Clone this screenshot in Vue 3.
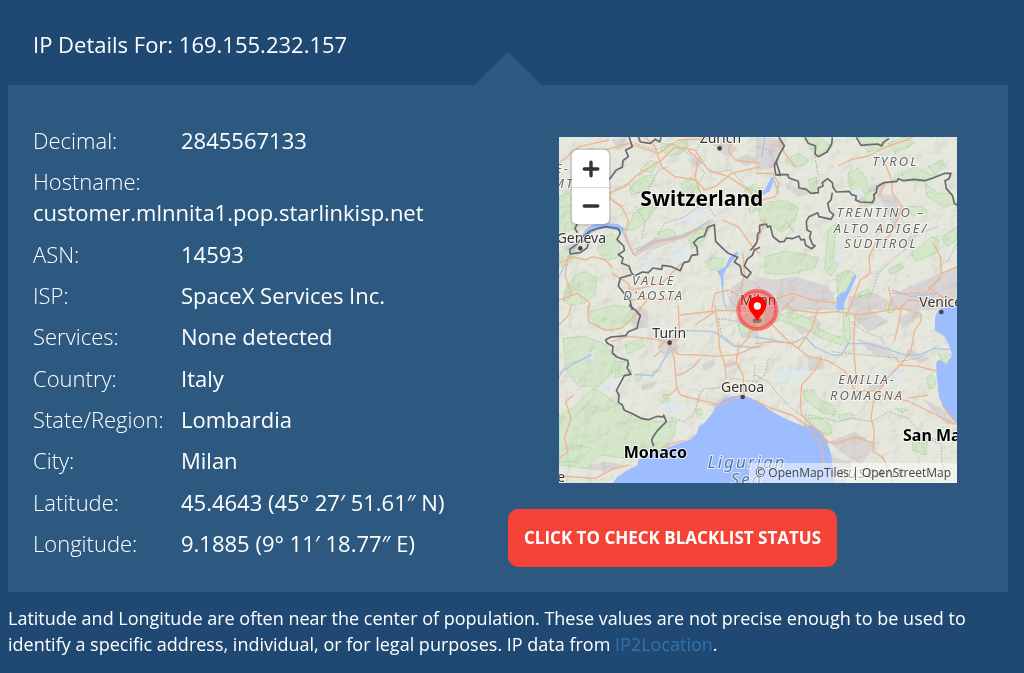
<script setup>
const details = [
  { label: 'Decimal:', value: '2845567133' },
  { label: 'Hostname:', value: 'customer.mlnnita1.pop.starlinkisp.net', wide: true },
  { label: 'ASN:', value: '14593' },
  { label: 'ISP:', value: 'SpaceX Services Inc.' },
  { label: 'Services:', value: 'None detected' },
  { label: 'Country:', value: 'Italy' },
  { label: 'State/Region:', value: 'Lombardia' },
  { label: 'City:', value: 'Milan' },
  { label: 'Latitude:', value: '45.4643 (45° 27′ 51.61″ N)' },
  { label: 'Longitude:', value: '9.1885 (9° 11′ 18.77″ E)' },
]

// Map geometry, drawn sheet by sheet: each sheet has its own origin.
const sheets = [
  {
    at: 'translate(-12 -21)',
    forest: [
      'M12 200l30-12 14 30 20 60-18 22-20-6-26 40z',
      'M12 235l45-10 10 60-30 20-25 10z',
      'M215 300l22-50 40-25 20-32 24 6-22 40-30 40-30 22z',
      'M225 175l40-35 28-6 6 22-40 30-30 10z',
      'M320 40l40 5 30-15 10 18-22 22-34 8-24-16z',
      'M380 160l24-18 22 10 4 30-24 20-24-8z',
      'M60 440l30-16 34 18-2 50-30 26-46 8-22-16 12-40z',
      'M130 330l40-20 22 30 2 40-40 12-26-30z',
      'M310 310l30-14 24 14-14 20-30 2z',
      'M450 395l30-14 28 8-10 26-32 6z',
      'M400 330l34-32 26 2-12 28-36 26z',
      'M570 180l30-20 15 20v50l-30 22z',
      'M255 120l30-30 24 8-18 30z',
      'M12 370l36-16 20 20-30 30-26 6z',
    ],
    town: [
      'M170 30l40-8 10 24-30 16z', 'M470 40l50-10 30 30-40 20z',
      'M540 90l36-20 30 20-30 20z', 'M20 350l40-10 20 20-40 14z',
      'M400 90l30-10 14 20-24 16z', 'M530 470l40-24 45 10v84h-96z',
      'M240 360l60-36 90-10 70-40 20-10-30 40-80 26-70 26-50 10z',
    ],
    snow: [
      'M370 280l34-34 50-12-10 30-40 24z', 'M250 400l40-26 30 6-20 30-40 12z',
      'M340 380l50-40 20 10-10 46-44 14z', 'M270 470l30-10 20 16-30 8z',
    ],
    water: [
      'M88 304q20-24 52-26l48 4 24 16-8 8-52-12q-30 4-48 20l-18 10z',
      'M548 362l-26 22-10 26-26 14 12 18 2 30 6-2-2-36 10-16 14-20 20-26z',
    ],
    river: [
      'M236 372l50-34 90-20 50-22 40-26', 'M88 310l-40 60-36 70',
      'M200 300l14 30 22 44', 'M502 472l4 40 10 28',
    ],
    road: [
      'M60 140l50 40 50 10 50-20 30-30 80-50 40-40 60 10 40 60 60 20 60 40 25 30',
      'M270 20l30 30 20 60 40 30 60 10 30 30 30-10 50-40 85-20',
      'M160 200l40 30 20 40-10 40 20 50 10 18 60-42 80-14 60-30',
      'M12 100l60-50 90-20', 'M150 60l70-20 90 30 60-40 90-4',
      'M500 270l50 20 50 70 15 10', 'M12 400l40-20 40 10 20-10 40 10 20 24',
      'M40 376l-10 60 20 60', 'M100 540l6-20-40-30-54 20',
      'M170 430l50 30 10 50 60-6 80 6', 'M470 540l10-50 40-10 40 20 55-30',
      'M400 60l30 30-10 50 20 60', 'M540 20l-20 40 20 30 75 10', 'M200 230l-30-20',
      'M564 370l4 60-10 50 10 60', 'M380 400l-60 60-90 20',
    ],
    canton: [
      'M240 40l60 20 50-20 50 30 50 60-40 60 20 40-40 30-60 20-40 60-60 20',
      'M440 20l-20 60 50 50 60-10 40 50 45 20', 'M180 180l40-20 20 30 40-10 30-60 30-10',
      'M240 230l30 40-10 60', 'M350 210l40 20 60-20 30 50',
      'M515 480l10 30 30 30',
    ],
    border: [
      'M222 20l10 30-20 10 8 20-16 12-2 20-18 8-16 22-18 16-60 40',
      'M250 20l6 16 30 4 14-12 14 8 4-14',
      'M66 282l-6 14 8 12M104 304L84 320l-20 24-20 14 2 14 30-4 20-14 4-14-14-8 18-28 22-8 28-6 36 6 6 14-10 18 20 20 2 14-18 12 14 10-4 16 22 8 6 18 10 12 24-12 18 2 14-14 26 4 2-12 28 4 26 12 10-24 16-4 8-18 18-2-2-22-10-14 14-14 18-6 10-26 20-8 4 50 22 22 16 14 28 12-10 14 18 12 4 24 16 12 12-16-20-20 8-20 16-12 6-16 17-8',
      'M230 434l-34 10-6 24 14 18 20 22 8 32',
    ],
  },
  {
    at: 'translate(588 -21)',
    forest: [
      'M10 240l30-24 50-4 40 20-10 40-36 34-40-20-20 10z',
      'M30 380l60-16 60 10 40 10-10 30-80 20-70-4z',
      'M140 20l60 4 30 26-30 30-24-10-14-24z',
      'M90 90l40-20 30 20-10 16-40 4z', 'M280 130l30-16 24 30 10 50-40 14-20-40z',
      'M310 22l90 0-20 34-40 10z', 'M440 130l40-20 60 30-30 14-64 0z',
      'M400 40l50-20 30 20-60 30z', 'M520 110l40-20 20 30-40 16z',
      'M510 160l40 30 40 0 16 30-40 10-50-30z', 'M470 370l60-50 22 10-10 40-60 24z',
      'M220 300l24-20-6 60 10 60-20 40-20-20z', 'M560 320l46-30v40l-30 20z',
      'M400 420l36-20 10 14-40 20z', 'M245 440l30-20 24 10-20 40-30 30z',
      'M310 490l30-14 10 20-30 10z', 'M330 190l30-10 0 40-30 10z',
      'M160 150l24-10 4 40-20 6z', 'M460 230l40 0 20 16-50 10z',
    ],
    town: [
      'M2 24l50 0 40 20-20 40-20 30-50 10z', 'M2 440l60 10 60-10 100 30 30 70H2z',
      'M280 500l60-20 60 30 60-40 146-60v130H280z', 'M90 170l60 0 20 20-40 10z',
      'M240 200l60 10 60-50 40 0-60 60z', 'M370 190l50 10 20 40-20 60-20-40z',
    ],
    snow: [
      'M285 185l30-14 16 26-20 12z', 'M240 350l20 10-6 40-14-10z',
      'M545 130l30-16 10 16-30 6z', 'M100 320l30-10 10 12-30 6z',
    ],
    water: [
      'M300 432l4 10-20 42-16 34-6 22h-16l-2-36 12-14 16-6z',
      'M0 200l30-20 20-40 8 4-14 40-40 22z',
    ],
    river: ['M56 150l16 40M30 20l-10 60', 'M410 480l60 20 80-10'],
    road: [
      'M2 130l50 0 20 30-10 40-40 10', 'M70 30l20 40 34 44',
      'M250 108l40-20 50-10 60-30 60-20 50-28', 'M390 100l20 50 2 40 30 40-20 50-20 40-40 20-20 40 4 50-30 20-30 80-14 30',
      'M2 500l50 10 60-20 60 20 80 10', 'M400 470l10 40-10 30M410 490l100 0 50-50-4-60-20-40',
      'M560 430l46-20M520 470l40 30 46 10', 'M0 350l20-50 10-30', 'M120 500l-40 40M370 200l20-40',
      'M430 540l30-30 100 10',
    ],
    canton: [
      'M2 50l40 10 20 50', 'M90 270l30 40', 'M310 500l40-10 20-60 40-40 40-30 20-50',
      'M450 350l40-40 60-20', 'M540 420l40-30 26-50', 'M180 80l10 60',
    ],
    border: [
      'M72 22l16 26-14 24-10 24 12 40-14-2-4-28 16-34',
      'M62 134l36 0 4 10 28 10 2 20 22 4 14 12 22-2 0-14 14-6-2-10 16-12 14 12 2 14 10 14 38-2 8 10 14 4-2 12 14 6 36 2 6-12-2-12 8-6 2-18 20-12 40-4 4-8 16 6 30-4 34 4 24-8 36-14 18 0-6 16-12 6 4 24 18 20 6 24 24 16 16 4',
      'M150 22l10 18 22 8-2 24 10 8 26-14 14-24 2-20',
      'M304 22l14 24 24-2 26-2 12 6 4-10 18-12',
      'M232 188l-4 22-10 10 6 24 12 10-8 14-36-8-4-12-26 12-8 14 2 26 12 6-4 16 8 20 8 6-10 8-18-10-4-18-10 2-6-12-20 8-18-2-6 10-14 2-20-16-8-32-8 4-4-10-20 4 0 20-6 6-2 24-14 20-7 5',
    ],
  },
  {
    at: 'translate(-12 504)',
    forest: [
      'M24 100l60-6 60 20 36 40-10 50-40 40-60 0-36-50z',
      'M12 330l40-20 60-60 40 20 50 40 24 20 80 20 60 0-10 40-30 40-60 0-50 30-80-10-40 40-84-10z',
      'M100 20l80-20 60 10-10 40-60 30-50-20z', 'M210 120l50-20 8 24-50 24z',
      'M180 170l40 0 10 30-50 20z', 'M550 60l50-10 10 20-50 20z', 'M320 290l20-20 6 30-20 10z',
      'M12 440l40-20 60 10-40 40-60 0z', 'M240 210l20-6 0 20-16 4z', 'M425 315l12-6 4 20-14 4z',
    ],
    town: [
      'M310 100l50-10 10 40-40 24-20-20z', 'M250 0l30 20 0 50-40 0-10-20z',
      'M440 180l40-20 0 20-30 20z', 'M500 180l30-20 20 20-30 10z', 'M540 40l70-30v90l-50 0z',
      'M50 370l70-20-20 40-60 30z', 'M260 240l50-10-20 20-30 8z', 'M70 490l80-20 60 10-50 20z',
      'M460 300l60-30 20 4-60 34z',
    ],
    snow: ['M90 130l30 10-4 30-20-10z', 'M310 300l40-12 50 20-40 20z', 'M140 240l40-20 20 10-40 30z'],
    water: [
      'M170 540l16-24 24-16 38-20 2-16 50-24 30-10 50-18 26-8 20-20 6-20 20-14 20-26 10-20 22-20 30-10 30-4 30 12 30 18 30 22 40 20 50 22 28-4 26 20 16 24 14 42 6 44 4 60z',
    ],
    river: [
      'M240 208l50 4 20-20 30-50 4-30', 'M376 76l100 4 30 20 30 24 80 4', 'M12 208l40-30 60-30',
    ],
    road: [
      'M100 0l0 50 50 26 50-6 40-40 40-50', 'M170 110l50-16 60 6 50 8 40 40 60 2 60 4 60-6 50-24 25-4',
      'M344 112l14 50 4 50 4 40-20 16-24 2', 'M330 110l-20 20M296 156l24-20M360 212l24-6 30-20 20-24',
      'M366 250l10 20 60 16 60 14 60-26', 'M480 0l10 80 4 50 16 50 4 40', 'M600 50l-20 50-30 30-6 40 20 40 4 60',
      'M370 0l4 100-30 10', 'M374 30l120-14 120 4', 'M56 270l-24 20 16 50-20 60 10 40-26 20', 'M0 510l60 6 60 4 50-26 50-14',
      'M318 432l30-16 40-10', 'M12 60l30-30 6-30', 'M420 60l60-40', 'M514 182l30-10',
    ],
    canton: [
      'M490 40l10 50 40 30 60 10M600 180l-4 40 20 20', 'M430 270l20-20 40 0 40-30 70 10',
      'M350 340l40 10 30-30 14-50', 'M12 220l20-40 60-20 20-30', 'M490 40l60 10',
    ],
    border: [
      'M222 0l20 16 14 16-4 12-6 26-26 10-8 12-20 2-24 2-16 8 4 10 18 10-2 20 14 12 16 6 16 4 2 12-4 10 12 20-20 4-16 30-8 14 8 14-2 22 12 8 6 16 20 8 30 16 22 4 28-10 18 2 0-6 8 20-26 26-14 20-4 10 6 18',
    ],
  },
  {
    at: 'translate(588 504)',
    forest: [
      'M60 40l40-20 60 20 30 30 40 20 40 10-10 20-60-20-50-30z', 'M98 12l14-4 20 30-20 4z',
      'M145 260l30-4 20 30 40 14 6 30-40-6-50-40z', 'M150 330l40 4 40 30 0 20-30 10-50-40z',
      'M265 10l16 0 6 90-10 20-12-30z', 'M250 330l40-6 6 14-40 10z', 'M515 220l14-12 14 16-4 24-16 4z',
      'M550 145l24 10 12-10 8 12-30 20z', 'M420 310l40 4-20 10z', 'M480 380l40 20-10 50-40-16z',
      'M0 20l30-20 0 60-30 10z', 'M390 0l20 0 10 20-20 4z',
    ],
    town: [
      'M100 50l80-20 20 30-60 30z', 'M160 160l40-10 10 40-50 10z', 'M280 20l60-10 60 40-60 30z',
      'M300 100l80 20 40 40-60-10z', 'M430 40l60-30 10 20-60 40z', 'M220 410l80-30 60 40-40 60-50-30z',
      'M460 130l60 30-20 14-50-20z', 'M340 240l40-10 10 16-50 14z', 'M500 280l60 30 40 50-30-4z',
      'M200 430l40 30 50 10-20 66h-50z', 'M0 0h90l-20 50-70 20z',
    ],
    snow: ['M60 200l60-20 50 20-40 30-60-6z', 'M390 190l60 10-10 30-50 0z'],
    water: [
      'M608 362l-34-40-22-46-8-76 0-30 10-6 20 14 18-28-12-34-12-22-28-18 0-36 6-20 14-12 48-10z',
      'M243 0h22l4 12-20 6z', 'M214 500l-14-60 5 96z',
    ],
    river: ['M0 96l60 10 50 10 40-20 30 30 50 24 30 0 20-34 60 0 50 14 60 20 40 0 50-20 50 4'],
    road: [
      'M0 116l50-6 60 4 20-6M40 48l60 60 60 46 60 14 50 30 30 60 60 0 40 20 60 10 60 30 80 40',
      'M200 156l-20 40-40 44-4 60 4 30 60 60 24 24M0 286l50 24 60 20 30 20 30 30 30 40 6 60 20 50',
      'M300 30l-4 70 2 60 6 60', 'M98 0l10 14 80 10 60-4 60 10 80-12 50-10 60 20 0 20-20 30-10 60-30 40-40 40-40 60-10 60 10 40-4 60 30 20 20 40 10 50',
      'M430 180l60 4 54 14', 'M210 410l30 6 60-20 60 20', 'M440 0l-10 60-12 50', 'M460 280l60-10',
      'M190 10l-20 60-40 60', 'M560 300l48 60',
    ],
    canton: [
      'M0 230l30-20 10-50M0 210l40 20 30 40 40 40 40 30 60 0 40 10 40-10 60 10 50-30 60 20 40 50 60 20',
      'M290 50l40 30 50 20 10 20 40 50 60-10 60-40', 'M230 140l100 10 100 10', 'M520 400l40 20 0 50 20 60',
    ],
    border: [],
  },
]

const countries = [
  { x: 244, y: 207, text: 'Switzerland', big: true },
  { x: 194, y: 964, text: 'Monaco' },
  { x: 1032, y: 912, text: 'San Marino' },
]
const cities = [
  { x: 422, y: 19, text: 'Zürich', dot: [482, 34] },
  { x: -7, y: 319, text: 'Geneva', dot: [64, 334] },
  { x: 280, y: 603, text: 'Turin', dot: [332, 617] },
  { x: 486, y: 766, text: 'Genoa', dot: [551, 780] },
  { x: 543, y: 503, text: 'Milan' },
  { x: 1081, y: 511, text: 'Venice', dot: [1147, 525] },
  { x: -68, y: 1035, text: 'Nice' },
]
const regions = [
  { x: 10, y: 107, text: 'E-' },
  { x: 14, y: 154, text: 'MT' },
  { x: 1009, y: 87, text: 'TYROL' },
  { x: 966, y: 241, text: 'TRENTINO –' },
  { x: 966, y: 287, text: 'ALTO ADIGE/' },
  { x: 966, y: 333, text: 'SÜDTIROL' },
  { x: 284, y: 443, text: 'VALLE' },
  { x: 284, y: 489, text: 'D\'AOSTA' },
  { x: 924, y: 742, text: 'EMILIA-' },
  { x: 924, y: 788, text: 'ROMAGNA' },
  { x: 940, y: 1022, text: 'TUSCANY' },
]
</script>

<template>
  <main class="page">
    <h1 class="title">IP Details For: 169.155.232.157</h1>

    <section class="panel">
      <dl class="details">
        <div v-for="d in details" :key="d.label" class="row" :class="{ wide: d.wide }">
          <dt>{{ d.label }}</dt>
          <dd>{{ d.value }}</dd>
        </div>
      </dl>

      <div class="side">
        <div class="map">
          <svg class="tiles" viewBox="0 0 1194 1038" preserveAspectRatio="xMidYMid slice" role="img" aria-label="Map of northern Italy">
            <defs>
              <filter id="relief" x="0" y="0" width="100%" height="100%">
                <feTurbulence type="fractalNoise" baseFrequency="0.022" numOctaves="3" seed="8" />
                <feDiffuseLighting surfaceScale="12" diffuseConstant="1.15" lighting-color="#fff">
                  <feDistantLight azimuth="225" elevation="58" />
                </feDiffuseLighting>
              </filter>
            </defs>
            <rect width="1194" height="1038" fill="#e6e7dd" />
            <g v-for="(s, i) in sheets" :key="'a' + i" :transform="s.at">
              <path v-for="p in s.town" :key="p" :d="p" class="town" />
              <path v-for="p in s.forest" :key="p" :d="p" class="forest" />
              <path v-for="p in s.snow" :key="p" :d="p" class="snow" />
            </g>
            <rect width="1194" height="1038" filter="url(#relief)" class="relief" />
            <g v-for="(s, i) in sheets" :key="'b' + i" :transform="s.at">
              <path v-for="p in s.canton" :key="p" :d="p" class="canton" />
              <path v-for="p in s.water" :key="p" :d="p" class="water" />
              <path v-for="p in s.river" :key="p" :d="p" class="river" />
              <path v-for="p in s.road" :key="p" :d="p" class="road" />
            </g>
            <g v-for="(s, i) in sheets" :key="'c' + i" :transform="s.at">
              <path v-for="p in s.border" :key="p" :d="p" class="border" />
            </g>
            <text v-for="r in regions" :key="r.text" :x="r.x" :y="r.y" class="region">{{ r.text }}</text>
            <text x="564" y="992" class="sea">Ligurian</text>
            <text x="564" y="1045" class="sea">Sea</text>
            <template v-for="c in cities" :key="c.text">
              <text :x="c.x" :y="c.y" class="city">{{ c.text }}</text>
              <circle v-if="c.dot" :cx="c.dot[0]" :cy="c.dot[1]" r="7" fill="#444" />
            </template>
            <text v-for="c in countries" :key="c.text" :x="c.x" :y="c.y" class="country" :class="{ big: c.big }">{{ c.text }}</text>
            <g transform="translate(595 519)">
              <circle r="57" fill="#ff2a2a" fill-opacity=".32" stroke="#ff2a2a" stroke-opacity=".55" stroke-width="12" />
              <ellipse cy="32" rx="14" ry="7" fill="#555" fill-opacity=".6" />
              <path d="M0 34C-10 14-27 2-27-14a27 27 0 0 1 54 0C27 2 10 14 0 34z" fill="#f00" />
              <circle cy="-12" r="11" fill="#fff" />
            </g>
          </svg>
          <div class="zoom">
            <button type="button" aria-label="Zoom in">
              <svg viewBox="0 0 16 16"><path d="M8 2v12M2 8h12" /></svg>
            </button>
            <button type="button" aria-label="Zoom out">
              <svg viewBox="0 0 16 16"><path d="M2 8h12" /></svg>
            </button>
          </div>
          <div class="credit"><a href="#">© OpenMapTiles</a> | <a href="#">OpenStreetMap</a></div>
        </div>
        <button type="button" class="check">CLICK TO CHECK BLACKLIST STATUS</button>
      </div>
    </section>

    <p class="note">
      Latitude and Longitude are often near the center of population. These values are not precise
      enough to be used to identify a specific address, individual, or for legal purposes. IP data from
      <a href="#">IP2Location</a>.
    </p>
  </main>
</template>

<style>
body {
  background: #1f4972;
}
</style>

<style scoped>
.page {
  padding: 0 16px 0 8px;
  font-family: "Open Sans", "Noto Sans", sans-serif;
  color: #fff;
}
.title {
  margin: 0;
  padding: 29px 25px 26px;
  font-size: 22px;
  font-weight: 400;
  line-height: 30px;
}
.panel {
  position: relative;
  display: grid;
  grid-template-columns: 1fr 1fr;
  padding: 40px 0 25px;
  background: #2d5980;
}
.panel::before {
  content: "";
  position: absolute;
  left: 50%;
  bottom: 100%;
  margin-left: -34px;
  border: solid transparent;
  border-width: 0 34px 33px;
  border-bottom-color: #2d5980;
}
.details {
  display: flex;
  flex-direction: column;
  justify-content: space-between;
  margin: 0;
  padding: 0 0 8px 25px;
  font-size: 22px;
  line-height: 31px;
}
.row {
  display: flex;
}
.row dt {
  width: 148px;
  font-weight: 300;
}
.row dd {
  margin: 0;
}
.row.wide {
  flex-direction: column;
}
.side {
  padding-top: 12px;
}
.map {
  position: relative;
  height: 346px;
  margin: 0 51px 26px;
  overflow: hidden;
}
.tiles {
  display: block;
  width: 100%;
  height: 100%;
}
.tiles path {
  stroke-linejoin: round;
}
.town { fill: #d8d5d4; }
.forest { fill: #d6e6ca; stroke: #a0dc98; stroke-width: 3; stroke-dasharray: 5 4; }
.snow { fill: #dfe9ea; }
.water { fill: #9dbdff; }
.relief { mix-blend-mode: multiply; opacity: .22; }
.canton { fill: none; stroke: #b4b4b4; stroke-width: 3; stroke-dasharray: 6 4; }
.river { fill: none; stroke: #a9c6e6; stroke-width: 4; }
.road { fill: none; stroke: #efb590; stroke-width: 4; }
.border { fill: none; stroke: #6a6a6e; stroke-width: 5; }
.tiles text {
  font-family: "Noto Sans", "Open Sans", sans-serif;
  paint-order: stroke;
  stroke: rgba(255, 255, 255, .7);
  stroke-width: 6px;
}
.region {
  font-size: 39px;
  font-style: italic;
  letter-spacing: 6px;
  text-anchor: middle;
  fill: #666;
}
.sea {
  font-size: 51px;
  font-style: italic;
  letter-spacing: 6px;
  text-anchor: middle;
  fill: #54789f;
}
.city { font-size: 42px; fill: #333; }
.country { font-size: 48px; font-weight: 700; fill: #000; }
.country.big { font-size: 63px; }
.zoom {
  position: absolute;
  top: 13px;
  left: 13px;
  border-radius: 5px;
  background: #fff;
  box-shadow: 0 0 0 2px rgba(0, 0, 0, .1);
}
.zoom button {
  display: grid;
  place-items: center;
  width: 37px;
  height: 37px;
  padding: 0;
  border: 0;
  background: none;
}
.zoom button + button {
  border-top: 1px solid #ddd;
}
.zoom svg {
  width: 18px;
  height: 18px;
}
.zoom path {
  fill: none;
  stroke: #333;
  stroke-width: 3;
  stroke-linecap: round;
}
.credit {
  position: absolute;
  right: 0;
  bottom: 0;
  padding: 0 6px;
  background: rgba(255, 255, 255, .5);
  font-size: 12px;
  line-height: 20px;
  color: #444;
}
.credit a {
  color: inherit;
  text-decoration: none;
}
.check {
  display: block;
  padding: 17px 16px;
  border: 0;
  border-radius: 10px;
  background: #f44336;
  color: #fff;
  font: 700 17px/24px "Open Sans", "Noto Sans", sans-serif;
}
.note {
  margin: 13px 0 0;
  font-size: 18px;
  line-height: 26px;
}
.note a {
  color: #3272ae;
  text-decoration: none;
}
</style>
